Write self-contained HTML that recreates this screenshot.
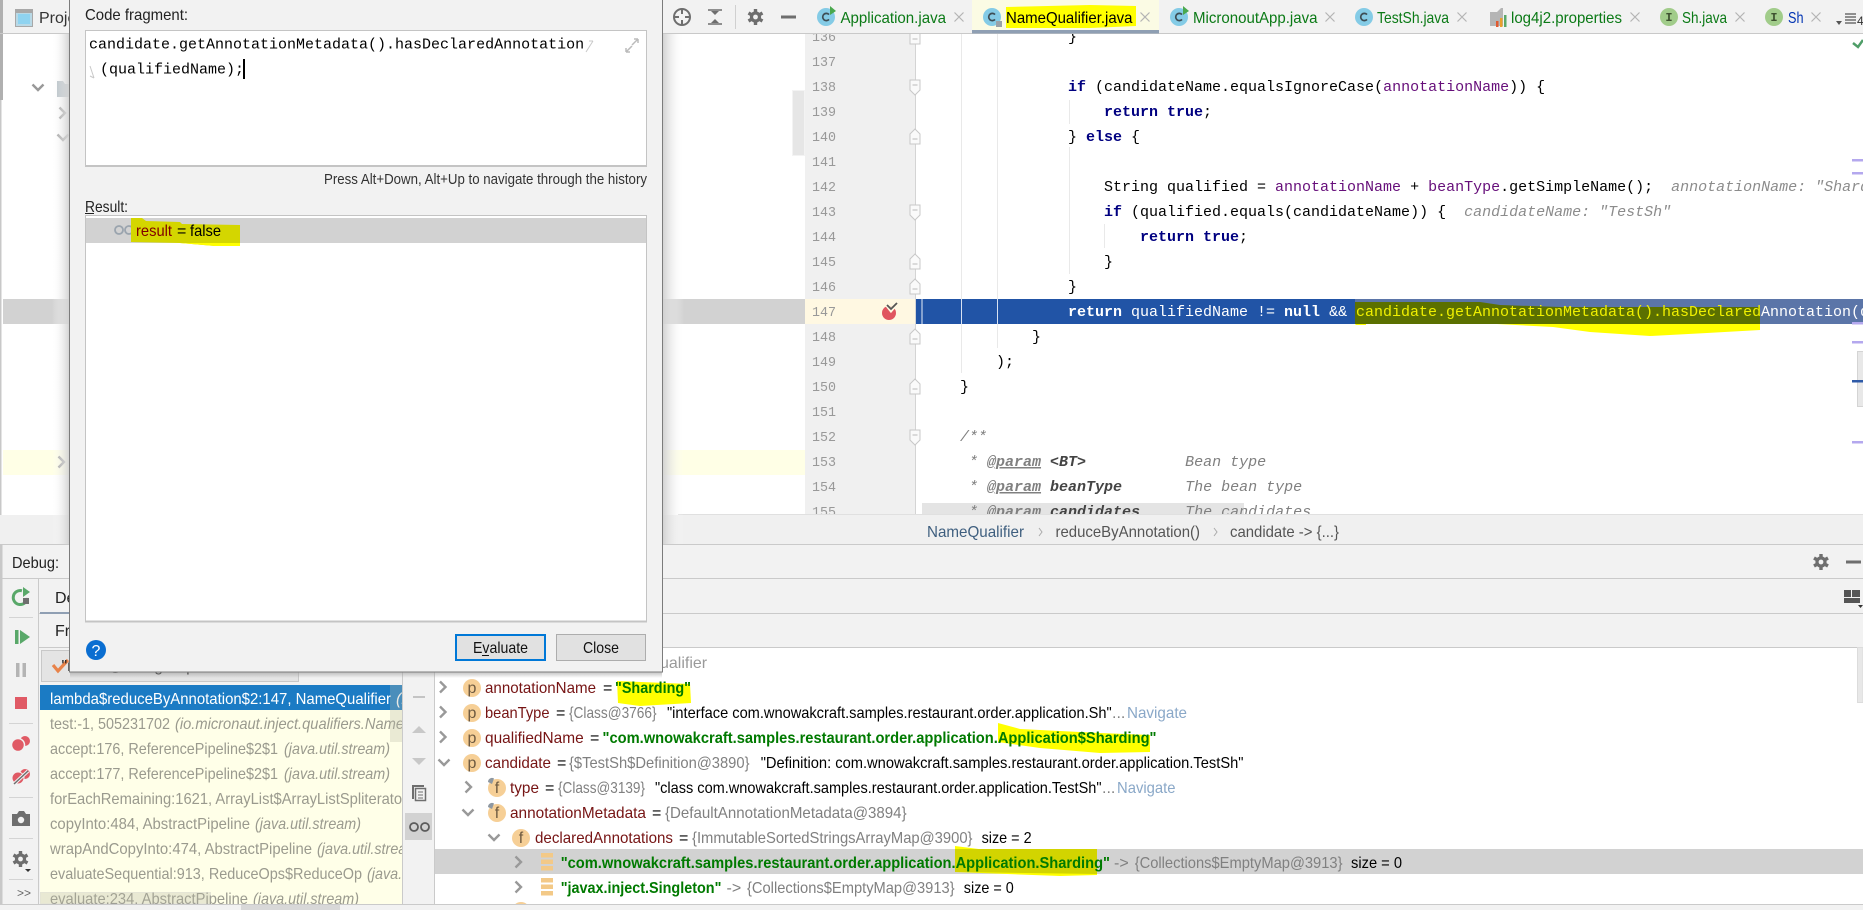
<!DOCTYPE html>
<html><head><meta charset="utf-8"><title>Debug</title>
<style>
html,body{margin:0;padding:0;background:#fff;overflow:hidden}
svg{display:block}
text{white-space:pre}
.s{font:16px "Liberation Sans",sans-serif}
.m{font:15px "Liberation Mono",monospace;fill:#000}
.k{font-weight:bold;fill:#000080}
.v{fill:#660e7a}
.c{font-style:italic;fill:#808080}
.h{font-style:italic;fill:#8c8c8c}
.ln{font:14px "Liberation Mono",monospace;fill:#999}
.tab{fill:#0b7a16}
.fr{fill:#9a9a8e}
.it{font-style:italic}
.n{fill:#761414}
.g{fill:#808080}
.b{font-weight:bold;fill:#007a00}
.nav{fill:#8aa8c8}
.ic{font:bold 12px "Liberation Mono",monospace;text-anchor:middle}
</style></head><body>
<svg width="1863" height="910" viewBox="0 0 1863 910" xmlns="http://www.w3.org/2000/svg">
<defs>
<linearGradient id="sr" x1="0" x2="1" y1="0" y2="0"><stop offset="0" stop-color="#cfcfcf"/><stop offset="1" stop-color="#fff" stop-opacity="0"/></linearGradient>
<linearGradient id="sl" x1="1" x2="0" y1="0" y2="0"><stop offset="0" stop-color="#cfcfcf"/><stop offset="1" stop-color="#fff" stop-opacity="0"/></linearGradient>
<linearGradient id="sb" x1="0" x2="0" y1="0" y2="1"><stop offset="0" stop-color="#999" stop-opacity=".6"/><stop offset="1" stop-color="#999" stop-opacity="0"/></linearGradient>
<g id="x"><path d="M-4.500-4.500 4.500 4.500M-4.500 4.500 4.500-4.500" stroke="#b4b4b4" stroke-width="1.200" fill="none"/></g>
<g id="cr"><path d="M-2.500-5.500 3 0-2.500 5.500" stroke="#999" stroke-width="2.400" fill="none"/></g>
<g id="cd"><path d="M-5.500-2.500 0 3 5.500-2.500" stroke="#999" stroke-width="2.400" fill="none"/></g>
<g id="gear"><path d="M0-8V8M-7-4 7 4M-7 4 7-4" stroke="#6e6e6e" stroke-width="3.400" fill="none"/><circle r="5.600" fill="#6e6e6e"/><circle r="2.400" fill="#f2f2f2"/></g>
<g id="cls"><circle r="9" fill="#84cbe6"/><path d="M3-2.400A3.600 3.600 0 1 0 3 2.400" stroke="#3d4d55" stroke-width="1.700" fill="none"/></g>
<path id="run" d="M0-5 6 0 0 4Z" fill="#4aa84e"/>
<g id="fd"><path d="M-5-7H5V3L0 8-5 3Z" fill="#fafafa" stroke="#c8c8c8"/><path d="M-2.500-2H2.500" stroke="#bbb"/></g>
<g id="fu"><path d="M-5 7H5V-3L0-8-5-3Z" fill="#fafafa" stroke="#c8c8c8"/><path d="M-2.500 2H2.500" stroke="#bbb"/></g>
<g id="p"><circle r="9" fill="#f6cf96"/></g>
<g id="f"><circle r="9" fill="#f6cf96"/><path d="M-9-6A4 4 0 0 1-3-9.500L-5-4Z" fill="#8e98a2"/></g>
<g id="mp"><rect x="-6" y="-9" width="12" height="4.500" fill="#f3c987"/><rect x="-6" y="-2.500" width="12" height="4.500" fill="#f3c987"/><rect x="-6" y="4" width="12" height="4.500" fill="#f3c987"/></g>
</defs>

<rect width="1863" height="910" fill="#fff"/>

<!-- project panel -->
<rect x="3" y="299" width="802" height="25" fill="#d2d2d2"/>
<rect x="3" y="450" width="802" height="25" fill="#ffffe6"/>
<use href="#cr" x="61" y="462"/>
<rect x="792.500" y="90.500" width="12" height="65" fill="#e6e6e6" stroke="#f3f3f3"/>
<rect x="0" y="0" width="3" height="100" fill="#b0b0b0"/>
<rect x="0" y="100" width="1.500" height="810" fill="#c8c8c8"/>
<use href="#cd" x="38" y="87"/>
<path d="M57 81H63L65 84H70V97H57Z" fill="#aeb9c0"/>
<use href="#cr" x="62" y="113"/>
<use href="#cd" x="63" y="137"/>

<!-- gutter -->
<rect x="805" y="33" width="111" height="482" fill="#f0f0f0"/>
<rect x="805" y="299" width="110.500" height="25" fill="#fff8e2"/>
<rect x="915" y="33" width="1" height="482" fill="#d4d4d4"/>
<g transform="translate(0,-1)">
<text class="ln" x="812" y="42" textLength="24" lengthAdjust="spacingAndGlyphs">136</text>
<text class="ln" x="812" y="67" textLength="24" lengthAdjust="spacingAndGlyphs">137</text>
<text class="ln" x="812" y="92" textLength="24" lengthAdjust="spacingAndGlyphs">138</text>
<text class="ln" x="812" y="117" textLength="24" lengthAdjust="spacingAndGlyphs">139</text>
<text class="ln" x="812" y="142" textLength="24" lengthAdjust="spacingAndGlyphs">140</text>
<text class="ln" x="812" y="167" textLength="24" lengthAdjust="spacingAndGlyphs">141</text>
<text class="ln" x="812" y="192" textLength="24" lengthAdjust="spacingAndGlyphs">142</text>
<text class="ln" x="812" y="217" textLength="24" lengthAdjust="spacingAndGlyphs">143</text>
<text class="ln" x="812" y="242" textLength="24" lengthAdjust="spacingAndGlyphs">144</text>
<text class="ln" x="812" y="267" textLength="24" lengthAdjust="spacingAndGlyphs">145</text>
<text class="ln" x="812" y="292" textLength="24" lengthAdjust="spacingAndGlyphs">146</text>
<text class="ln" x="812" y="317" textLength="24" lengthAdjust="spacingAndGlyphs">147</text>
<text class="ln" x="812" y="342" textLength="24" lengthAdjust="spacingAndGlyphs">148</text>
<text class="ln" x="812" y="367" textLength="24" lengthAdjust="spacingAndGlyphs">149</text>
<text class="ln" x="812" y="392" textLength="24" lengthAdjust="spacingAndGlyphs">150</text>
<text class="ln" x="812" y="417" textLength="24" lengthAdjust="spacingAndGlyphs">151</text>
<text class="ln" x="812" y="442" textLength="24" lengthAdjust="spacingAndGlyphs">152</text>
<text class="ln" x="812" y="467" textLength="24" lengthAdjust="spacingAndGlyphs">153</text>
<text class="ln" x="812" y="492" textLength="24" lengthAdjust="spacingAndGlyphs">154</text>
<text class="ln" x="812" y="517" textLength="24" lengthAdjust="spacingAndGlyphs">155</text>
</g>
<use href="#fu" x="915" y="37"/>
<use href="#fd" x="915" y="87"/>
<use href="#fu" x="915" y="137"/>
<use href="#fd" x="915" y="212"/>
<use href="#fu" x="915" y="262"/>
<use href="#fu" x="915" y="287"/>
<use href="#fu" x="915" y="337"/>
<use href="#fu" x="915" y="387"/>
<use href="#fd" x="915" y="437"/>

<!-- breakpoint -->
<circle cx="889" cy="313" r="7" fill="#e0555f"/>
<path d="M887 305 891 310 897 303" stroke="#fff8e2" stroke-width="4" fill="none"/>
<path d="M887 305 891 309 897 303" stroke="#555" stroke-width="1.800" fill="none"/>

<!-- indent guides -->
<g fill="#e9e9e9">
<rect x="961" y="33" width="1" height="340"/>
<rect x="997" y="33" width="1" height="315"/>
<rect x="1069" y="100" width="1" height="24"/>
<rect x="1069" y="147" width="1" height="127"/>
<rect x="1104" y="224" width="1" height="24"/>
</g>

<!-- line 147 -->
<rect x="916" y="299" width="947" height="25" fill="#2154a6"/>
<rect x="1355" y="299" width="508" height="25" fill="#5b75a8"/>
<rect x="921.500" y="299" width="1" height="25" fill="#e8eef8"/>
<rect x="961" y="299" width="1" height="25" fill="#d8e2f2"/>
<rect x="997" y="299" width="1" height="25" fill="#d8e2f2"/>
<path d="M1355 302H1480L1500 305 1560 307H1760V324H1355Z" fill="#5b7000"/>
<path d="M1355 324H1366V325L1356 325ZM1497 324H1760V330L1707 333 1650 336 1590 332 1553 327Z" fill="#ffff00"/>

<rect x="922" y="503" width="322" height="14" fill="#e4e4e4"/>

<!-- code -->
<g transform="translate(0,-1)">
<text class="m" x="1068" y="42">}</text>
<text class="m" x="1068" y="92"><tspan class="k">if</tspan> (candidateName.equalsIgnoreCase(<tspan class="v">annotationName</tspan>)) {</text>
<text class="m" x="1104" y="117"><tspan class="k">return true</tspan>;</text>
<text class="m" x="1068" y="142">} <tspan class="k">else</tspan> {</text>
<text class="m" x="1104" y="192">String qualified = <tspan class="v">annotationName</tspan> + <tspan class="v">beanType</tspan>.getSimpleName();  <tspan class="h">annotationName: "Sharding"</tspan></text>
<text class="m" x="1104" y="217"><tspan class="k">if</tspan> (qualified.equals(candidateName)) {  <tspan class="h">candidateName: "TestSh"</tspan></text>
<text class="m" x="1140" y="242"><tspan class="k">return true</tspan>;</text>
<text class="m" x="1104" y="267">}</text>
<text class="m" x="1068" y="292">}</text>
<text class="m" x="1068" y="317" style="fill:#fff"><tspan font-weight="bold">return</tspan> qualifiedName != <tspan font-weight="bold">null</tspan> &amp;&amp; </text>
<text class="m" x="1356" y="317" style="fill:#f0f000">candidate.getAnnotationMetadata().hasDeclared</text>
<text class="m" x="1761" y="317" style="fill:#fff">Annotation(qualifiedName);</text>
<text class="m" x="1032" y="342">}</text>
<text class="m" x="996" y="367">);</text>
<text class="m" x="960" y="392">}</text>
<text class="m c" x="960" y="442" style="fill:#808080">/**</text>
<text class="m c" x="969" y="467" style="fill:#808080">* <tspan text-decoration="underline" font-weight="bold">@param</tspan> <tspan font-weight="bold" fill="#444">&lt;BT&gt;</tspan>           Bean type</text>
<text class="m c" x="969" y="492" style="fill:#808080">* <tspan text-decoration="underline" font-weight="bold">@param</tspan> <tspan font-weight="bold" fill="#444">beanType</tspan>       The bean type</text>
<text class="m c" x="969" y="517" style="fill:#808080">* <tspan text-decoration="underline" font-weight="bold">@param</tspan> <tspan font-weight="bold" fill="#444">candidates</tspan>     The candidates</text>
</g>

<!-- stripe marks -->
<path d="M1853 43 1858 47 1863 40" stroke="#4f9e68" stroke-width="2.500" fill="none"/>
<rect x="1852" y="159" width="11" height="2.500" fill="#b4a8ee"/>
<rect x="1852" y="172" width="11" height="2.500" fill="#b4a8ee"/>
<rect x="1852" y="322" width="11" height="2.500" fill="#b4a8ee"/>
<rect x="1852" y="341" width="11" height="2.500" fill="#b4a8ee"/>
<rect x="1857.500" y="351.500" width="6" height="55" fill="#e8e8e8" stroke="#d4d4d4"/>
<rect x="1852" y="380" width="11" height="2.500" fill="#2e5aa7"/>
<rect x="1852" y="441" width="11" height="2.500" fill="#b4a8ee"/>

<!-- breadcrumb -->
<rect x="0" y="515" width="1863" height="30" fill="#f0f0f0"/>
<rect x="678" y="514" width="1185" height="1" fill="#e0e0e0"/>
<text class="s" x="927" y="537" fill="#3f5f7f" textLength="97" lengthAdjust="spacingAndGlyphs">NameQualifier</text>
<path d="M1039 528 1042 532 1039 536" stroke="#aaa" fill="none"/>
<text class="s" x="1055.500" y="537" fill="#555" textLength="144.500" lengthAdjust="spacingAndGlyphs">reduceByAnnotation()</text>
<path d="M1214 528 1217 532 1214 536" stroke="#aaa" fill="none"/>
<text class="s" x="1230" y="537" fill="#555" textLength="109" lengthAdjust="spacingAndGlyphs">candidate -&gt; {...}</text>

<!-- tab bar -->
<rect x="0" y="0" width="1863" height="33" fill="#f2f2f2"/>
<rect x="0" y="33" width="1863" height="1" fill="#c9c9c9"/>
<rect x="0" y="0" width="3" height="33" fill="#b0b0b0"/>
<rect x="15.500" y="9.500" width="17" height="17" fill="#b9d9e6" stroke="#a8a8a8"/>
<rect x="16" y="10" width="16" height="3" fill="#a8a8a8"/>
<rect x="18" y="14" width="12" height="10" fill="#8fd3f0"/>
<text class="s" x="39" y="23" fill="#333">Project</text>

<circle cx="682" cy="17" r="8" fill="none" stroke="#6e6e6e" stroke-width="2"/>
<path d="M682 9V14M682 20V25M674 17H679M685 17H690" stroke="#6e6e6e" stroke-width="2"/>
<path d="M708 10H722M708 24H722" stroke="#6e6e6e" stroke-width="1.500" fill="none"/>
<path d="M711 11H719L715 15ZM711 23H719L715 19Z" fill="#6e6e6e"/>
<rect x="735" y="5" width="1" height="24" fill="#d0d0d0"/>
<use href="#gear" x="755.500" y="17"/>
<rect x="781" y="15.500" width="15" height="3" fill="#6e6e6e"/>

<use href="#cls" x="826" y="17"/>
<use href="#run" x="830" y="11"/>
<text class="s tab" x="840.500" y="23" textLength="105.500" lengthAdjust="spacingAndGlyphs">Application.java</text>
<use href="#x" x="959" y="17"/>

<rect x="972" y="0" width="187" height="30" fill="#fbfbe4"/>
<rect x="972" y="30" width="187" height="3.500" fill="#8f9fb3"/>
<use href="#cls" x="992" y="17"/>
<rect x="996" y="21" width="6" height="6" fill="#9aa2a8"/>
<path d="M1006 7 1090 5 1136 6V26L1090 28 1006 28Z" fill="#ffff00"/>
<text class="s" x="1006" y="23" fill="#000" textLength="126.500" lengthAdjust="spacingAndGlyphs">NameQualifier.java</text>
<use href="#x" x="1145" y="17"/>

<use href="#cls" x="1179" y="17"/>
<use href="#run" x="1183" y="11"/>
<text class="s tab" x="1193" y="23" textLength="124.500" lengthAdjust="spacingAndGlyphs">MicronoutApp.java</text>
<use href="#x" x="1330" y="17"/>

<use href="#cls" x="1364" y="17"/>
<text class="s tab" x="1377" y="23" textLength="72" lengthAdjust="spacingAndGlyphs">TestSh.java</text>
<use href="#x" x="1462" y="17"/>

<path d="M1490 12H1497L1501 8H1503V26H1490Z" fill="#b5b5b5"/>
<rect x="1496" y="21" width="2.500" height="6" fill="#e05a30"/>
<rect x="1500" y="18" width="2.500" height="9" fill="#e8a02c"/>
<rect x="1504" y="15" width="2.500" height="12" fill="#59a869"/>
<text class="s tab" x="1511" y="23" textLength="111" lengthAdjust="spacingAndGlyphs">log4j2.properties</text>
<use href="#x" x="1635" y="17"/>

<circle cx="1669" cy="17" r="9" fill="#a1cc8a"/>
<text class="ic" x="1669" y="21" fill="#3e5230">I</text>
<text class="s tab" x="1682" y="23" textLength="45" lengthAdjust="spacingAndGlyphs">Sh.java</text>
<use href="#x" x="1740" y="17"/>

<circle cx="1774" cy="17" r="9" fill="#a1cc8a"/>
<text class="ic" x="1774" y="21" fill="#3e5230">I</text>
<text class="s" x="1788" y="23" fill="#0033b3" textLength="15.500" lengthAdjust="spacingAndGlyphs">Sh</text>
<use href="#x" x="1816" y="17"/>

<path d="M1836 21H1842L1839 25Z" fill="#555"/>
<path d="M1845 14H1856M1845 17H1856M1845 20H1856M1845 23H1856" stroke="#6e6e6e" stroke-width="1.500"/>
<text class="s" x="1857" y="25" fill="#333" style="font-size:12px">4</text>

<!-- debug panel -->
<rect x="0" y="544" width="1863" height="366" fill="#f2f2f2"/>
<rect x="0" y="544" width="1863" height="1" fill="#cacaca"/>
<rect x="0" y="578" width="1863" height="1" fill="#cacaca"/>
<rect x="38" y="613" width="1825" height="1" fill="#cacaca"/>
<rect x="38" y="647" width="1825" height="1" fill="#cacaca"/>
<rect x="38" y="578" width="1" height="326" fill="#cacaca"/>
<rect x="0" y="544" width="2.500" height="366" fill="#c8c8c8"/>
<text class="s" x="12" y="568" fill="#222" textLength="47" lengthAdjust="spacingAndGlyphs">Debug:</text>
<use href="#gear" x="1821" y="562"/>
<rect x="1846" y="560.500" width="15" height="3" fill="#6e6e6e"/>
<path d="M1844 590H1851V597H1844ZM1852 590H1860V597H1852ZM1844 598H1860V603H1844Z" fill="#555"/>
<path d="M1858 605H1863L1860.500 608Z" fill="#333"/>

<text class="s" x="55" y="603" fill="#222">Debugger</text>
<rect x="40" y="612" width="60" height="2" fill="#8f9fb3"/>
<text class="s" x="55" y="636" fill="#222">Frames</text>

<rect x="41.500" y="650.500" width="257" height="31" fill="#e4e4e4" stroke="#c8c8c8"/>
<path d="M53 665 58 671 68 660" stroke="#e8834a" stroke-width="3.200" fill="none"/>
<text class="s" x="195" y="671" fill="#222" text-anchor="end">"main"@1 in group</text>

<!-- frames -->
<rect x="40" y="685" width="362" height="219" fill="#ffffe8"/>
<rect x="40" y="685" width="362" height="25" fill="#1b7bc4"/>
<text class="s" x="50" y="704" fill="#fff" textLength="341" lengthAdjust="spacingAndGlyphs">lambda$reduceByAnnotation$2:147, NameQualifier</text>
<text class="s it" x="396" y="704" fill="#fff">(io.micronaut</text>
<text class="s fr" x="50" y="729" textLength="120" lengthAdjust="spacingAndGlyphs">test:-1, 505231702</text>
<text class="s fr it" x="175" y="729" textLength="229" lengthAdjust="spacingAndGlyphs">(io.micronaut.inject.qualifiers.Name</text>
<text class="s fr" x="50" y="754" textLength="228" lengthAdjust="spacingAndGlyphs">accept:176, ReferencePipeline$2$1</text>
<text class="s fr it" x="284" y="754" textLength="106" lengthAdjust="spacingAndGlyphs">(java.util.stream)</text>
<text class="s fr" x="50" y="779" textLength="228" lengthAdjust="spacingAndGlyphs">accept:177, ReferencePipeline$2$1</text>
<text class="s fr it" x="284" y="779" textLength="106" lengthAdjust="spacingAndGlyphs">(java.util.stream)</text>
<text class="s fr" x="50" y="804" textLength="357" lengthAdjust="spacingAndGlyphs">forEachRemaining:1621, ArrayList$ArrayListSpliterator</text>
<text class="s fr" x="50" y="829" textLength="200" lengthAdjust="spacingAndGlyphs">copyInto:484, AbstractPipeline</text>
<text class="s fr it" x="255" y="829" textLength="106" lengthAdjust="spacingAndGlyphs">(java.util.stream)</text>
<text class="s fr" x="50" y="854" textLength="262" lengthAdjust="spacingAndGlyphs">wrapAndCopyInto:474, AbstractPipeline</text>
<text class="s fr it" x="317" y="854" textLength="106" lengthAdjust="spacingAndGlyphs">(java.util.stream)</text>
<text class="s fr" x="50" y="879" textLength="312" lengthAdjust="spacingAndGlyphs">evaluateSequential:913, ReduceOps$ReduceOp</text>
<text class="s fr it" x="367" y="879" textLength="106" lengthAdjust="spacingAndGlyphs">(java.util.stream)</text>
<text class="s fr" x="50" y="904" textLength="198" lengthAdjust="spacingAndGlyphs">evaluate:234, AbstractPipeline</text>
<text class="s fr it" x="253" y="904" textLength="106" lengthAdjust="spacingAndGlyphs">(java.util.stream)</text>
<rect x="390" y="685" width="12" height="57" fill="#b8b8a4" opacity=".3"/>
<rect x="40.500" y="892.500" width="170" height="11" fill="#b8b8a4" opacity=".3" stroke="#aaa"/>

<!-- mid toolbar -->
<rect x="402" y="647" width="32" height="257" fill="#f2f2f2"/>
<rect x="402" y="647" width="1" height="257" fill="#cacaca"/>
<rect x="434" y="647" width="1" height="257" fill="#cacaca"/>
<rect x="413" y="696" width="12" height="2" fill="#c4c4c4"/>
<path d="M412 733H426L419 726Z" fill="#c8c8c8"/>
<path d="M412 758H426L419 765Z" fill="#c8c8c8"/>
<path d="M412 785V799H414V787H424V785Z" fill="#6e6e6e"/>
<rect x="415.500" y="788.500" width="10" height="12" fill="#f2f2f2" stroke="#6e6e6e" stroke-width="1.500"/>
<path d="M418 792H423M418 795H423M418 798H423" stroke="#6e6e6e"/>
<rect x="405" y="813" width="27" height="27" fill="#d2d2d2"/>
<circle cx="414" cy="827" r="4" fill="none" stroke="#5c5c5c" stroke-width="1.800"/>
<circle cx="425" cy="827" r="4" fill="none" stroke="#5c5c5c" stroke-width="1.800"/>

<!-- left toolbar -->
<path d="M27 599A7 7 0 1 1 23 591" stroke="#59a869" stroke-width="3" fill="none" transform="rotate(-10 21 597)"/>
<path d="M23 587 30 592 23 597Z" fill="#59a869"/>
<rect x="23" y="598" width="6" height="6" fill="#6e6e6e"/>
<path d="M9 617.500H33M9 723.500H33M9 797.500H33M9 838.500H33M9 879.500H33" stroke="#d4d4d4"/>
<rect x="15" y="630" width="3.500" height="14" fill="#59a869"/>
<path d="M20 630 30 637 20 644Z" fill="#59a869"/>
<rect x="16" y="663" width="3.500" height="14" fill="#b4b4b4"/>
<rect x="22.500" y="663" width="3.500" height="14" fill="#b4b4b4"/>
<rect x="15" y="697" width="12" height="12" fill="#e05a65"/>
<circle cx="25" cy="741" r="5" fill="#e05a65"/>
<circle cx="18" cy="745" r="6.500" fill="#e05a65" stroke="#f2f2f2" stroke-width="1.500"/>
<circle cx="25" cy="774" r="5" fill="#e05a65"/>
<circle cx="18" cy="778" r="6" fill="#e05a65" stroke="#f2f2f2"/>
<path d="M14 784 28 771" stroke="#f2f2f2" stroke-width="3.500"/>
<path d="M14 784 28 771" stroke="#6e6e6e" stroke-width="1.500"/>
<path d="M12 814H17L19 811H24L26 814H30V826H12Z" fill="#6e6e6e"/>
<circle cx="21" cy="820" r="3.200" fill="#f2f2f2"/>
<use href="#gear" x="20.500" y="859"/>
<path d="M25 869H31L28 872Z" fill="#333"/>
<text class="s" x="17" y="897" fill="#666" style="font-size:12px">&gt;&gt;</text>

<!-- variables -->
<rect x="435" y="648" width="1428" height="256" fill="#fff"/>
<rect x="435" y="849" width="1428" height="25" fill="#d2d2d2"/>
<rect x="1857.500" y="647.500" width="5.500" height="55" fill="#e8e8e8" stroke="#dcdcdc"/>
<text class="s" x="660" y="668" fill="#9a9a9a">ualifier</text>

<path d="M617 681 690 684 691 703 640 706 618 703Z" fill="#ffff00"/>
<path d="M998 723 1020 729 1100 733 1150 735 1150 752 1100 753 1040 748 998 742Z" fill="#ffff00"/>
<path d="M955 846 1010 853 1097 857 1097 875 1060 876 955 872Z" fill="#ffff00"/>
<path d="M955 849H1097V874L955 872Z" fill="#d2d400"/>

<use href="#cr" x="442.500" y="687"/>
<use href="#p" x="472" y="688"/>
<text class="s" x="472" y="693" text-anchor="middle" fill="#6e5a40">p</text>
<text class="s n" x="485" y="693" textLength="111" lengthAdjust="spacingAndGlyphs">annotationName</text>
<text class="s" x="603" y="693">=</text>
<text class="s b" x="615" y="693" textLength="76" lengthAdjust="spacingAndGlyphs">"Sharding"</text>

<use href="#cr" x="442.500" y="712"/>
<use href="#p" x="472" y="713"/>
<text class="s" x="472" y="718" text-anchor="middle" fill="#6e5a40">p</text>
<text class="s n" x="485" y="718" textLength="64.500" lengthAdjust="spacingAndGlyphs">beanType</text>
<text class="s" x="556" y="718">=</text>
<text class="s g" x="569" y="718" textLength="87.500" lengthAdjust="spacingAndGlyphs">{Class@3766}</text>
<text class="s" x="667" y="718" textLength="444.700" lengthAdjust="spacingAndGlyphs">"interface com.wnowakcraft.samples.restaurant.order.application.Sh"</text>
<text class="s g" x="1112" y="718">...</text>
<text class="s nav" x="1127" y="718" textLength="60" lengthAdjust="spacingAndGlyphs">Navigate</text>

<use href="#cr" x="442.500" y="737"/>
<use href="#p" x="472" y="738"/>
<text class="s" x="472" y="743" text-anchor="middle" fill="#6e5a40">p</text>
<text class="s n" x="485" y="743" textLength="98.700" lengthAdjust="spacingAndGlyphs">qualifiedName</text>
<text class="s" x="590" y="743">=</text>
<text class="s b" x="602.500" y="743" textLength="554" lengthAdjust="spacingAndGlyphs">"com.wnowakcraft.samples.restaurant.order.application.Application$Sharding"</text>

<use href="#cd" x="444" y="762"/>
<use href="#p" x="472" y="763"/>
<text class="s" x="472" y="768" text-anchor="middle" fill="#6e5a40">p</text>
<text class="s n" x="485" y="768" textLength="66" lengthAdjust="spacingAndGlyphs">candidate</text>
<text class="s" x="557" y="768">=</text>
<text class="s g" x="569" y="768" textLength="180.500" lengthAdjust="spacingAndGlyphs">{$TestSh$Definition@3890}</text>
<text class="s" x="760.700" y="768" textLength="482.800" lengthAdjust="spacingAndGlyphs">"Definition: com.wnowakcraft.samples.restaurant.order.application.TestSh"</text>

<use href="#cr" x="468" y="787"/>
<use href="#f" x="497" y="788"/>
<text class="s" x="497" y="793" text-anchor="middle" fill="#6e5a40">f</text>
<text class="s n" x="510" y="793" textLength="29" lengthAdjust="spacingAndGlyphs">type</text>
<text class="s" x="545" y="793">=</text>
<text class="s g" x="558" y="793" textLength="87" lengthAdjust="spacingAndGlyphs">{Class@3139}</text>
<text class="s" x="655" y="793" textLength="446.500" lengthAdjust="spacingAndGlyphs">"class com.wnowakcraft.samples.restaurant.order.application.TestSh"</text>
<text class="s g" x="1102" y="793">...</text>
<text class="s nav" x="1117" y="793" textLength="58.500" lengthAdjust="spacingAndGlyphs">Navigate</text>

<use href="#cd" x="468" y="812"/>
<use href="#f" x="497" y="813"/>
<text class="s" x="497" y="818" text-anchor="middle" fill="#6e5a40">f</text>
<text class="s n" x="510" y="818" textLength="136" lengthAdjust="spacingAndGlyphs">annotationMetadata</text>
<text class="s" x="652" y="818">=</text>
<text class="s g" x="665" y="818" textLength="241.600" lengthAdjust="spacingAndGlyphs">{DefaultAnnotationMetadata@3894}</text>

<use href="#cd" x="494" y="837"/>
<use href="#p" x="521" y="838"/>
<text class="s" x="521" y="843" text-anchor="middle" fill="#6e5a40">f</text>
<text class="s n" x="535" y="843" textLength="138" lengthAdjust="spacingAndGlyphs">declaredAnnotations</text>
<text class="s" x="679" y="843">=</text>
<text class="s g" x="692" y="843" textLength="280.500" lengthAdjust="spacingAndGlyphs">{ImmutableSortedStringsArrayMap@3900}</text>
<text class="s" x="981.600" y="843" textLength="50" lengthAdjust="spacingAndGlyphs">size = 2</text>

<use href="#cr" x="518" y="862"/>
<use href="#mp" x="547" y="862"/>
<text class="s b" x="560.700" y="868" textLength="549.300" lengthAdjust="spacingAndGlyphs">"com.wnowakcraft.samples.restaurant.order.application.Application.Sharding"</text>
<text class="s g" x="1114" y="868">-&gt;</text>
<text class="s g" x="1134.700" y="868" textLength="207.800" lengthAdjust="spacingAndGlyphs">{Collections$EmptyMap@3913}</text>
<text class="s" x="1351" y="868" textLength="51" lengthAdjust="spacingAndGlyphs">size = 0</text>

<use href="#cr" x="518" y="887"/>
<use href="#mp" x="547" y="887"/>
<text class="s b" x="560.700" y="893" textLength="160.700" lengthAdjust="spacingAndGlyphs">"javax.inject.Singleton"</text>
<text class="s g" x="726.500" y="893">-&gt;</text>
<text class="s g" x="747" y="893" textLength="207.600" lengthAdjust="spacingAndGlyphs">{Collections$EmptyMap@3913}</text>
<text class="s" x="963.800" y="893" textLength="50" lengthAdjust="spacingAndGlyphs">size = 0</text>
<circle cx="521" cy="911" r="9" fill="#f6cf96"/>

<!-- bottom strip -->
<rect x="0" y="904" width="1863" height="6" fill="#f2f2f2"/>
<rect x="0" y="904" width="1863" height="1" fill="#cacaca"/>
<rect x="241" y="905" width="99" height="5" fill="#d8d8d8"/>

<!-- dialog shadow -->
<rect x="662" y="34" width="22" height="510" fill="url(#sr)"/>
<rect x="52" y="34" width="18" height="510" fill="url(#sl)"/>
<rect x="70" y="672" width="592" height="6" fill="url(#sb)"/>

<!-- dialog -->
<rect x="69.500" y="-2" width="593" height="674" fill="#f2f2f2" stroke="#7c7c7c"/>
<text class="s" x="85" y="20" fill="#222" textLength="103" lengthAdjust="spacingAndGlyphs">Code fragment:</text>
<rect x="85.500" y="30.500" width="561" height="136" fill="#fff" stroke="#c4c4c4"/>
<rect x="85" y="165" width="562" height="2" fill="#c4c4c4"/>
<text class="m" x="89" y="48.500">candidate.getAnnotationMetadata().hasDeclaredAnnotation</text>
<text class="m" x="100" y="73.500">(qualifiedName);</text>
<rect x="243" y="59" width="2" height="20" fill="#000"/>
<path d="M593 41 586 52M593 41H589M90 66 94 78M94 78 90 76" stroke="#c8c8c8" fill="none"/>
<path d="M638 39 632 45M638 39V43M638 39H634M626 52 632 46M626 52V48M626 52H630" stroke="#bbb" stroke-width="1.500" fill="none"/>

<text class="s" x="324" y="184" fill="#333" textLength="323" lengthAdjust="spacingAndGlyphs" style="font-size:14.500px">Press Alt+Down, Alt+Up to navigate through the history</text>
<text class="s" x="85" y="212" fill="#222" textLength="43" lengthAdjust="spacingAndGlyphs">Result:</text>
<rect x="85" y="213" width="9" height="1" fill="#222"/>
<rect x="85.500" y="215.500" width="561" height="406" fill="#fff" stroke="#c4c4c4"/>
<rect x="85" y="620.500" width="562" height="2" fill="#c4c4c4"/>
<rect x="86" y="218" width="560" height="25" fill="#d2d2d2"/>
<circle cx="119" cy="230" r="4" fill="none" stroke="#9aa4ae" stroke-width="1.800"/>
<circle cx="129" cy="230" r="4" fill="none" stroke="#9aa4ae" stroke-width="1.800"/>
<path d="M131 218 142 218 146 221 180 222 182 224 240 225V243L240 246 215 246 180 243 131 242Z" fill="#d4d600"/>
<path d="M180 243 215 246 240 246V243Z" fill="#ffff00"/>
<text class="s" x="136" y="236" fill="#800000" textLength="36" lengthAdjust="spacingAndGlyphs">result</text>
<text class="s" x="177" y="236" fill="#000">=</text>
<text class="s" x="190" y="236" fill="#000" textLength="31" lengthAdjust="spacingAndGlyphs">false</text>

<circle cx="96" cy="650" r="10" fill="#0a6ed1"/>
<text class="s" x="96" y="656" fill="#fff" text-anchor="middle">?</text>
<rect x="456" y="635" width="89" height="25" fill="#e1e1e1" stroke="#0078d7" stroke-width="2"/>
<text class="s" x="473" y="653" fill="#111" textLength="55" lengthAdjust="spacingAndGlyphs">Evaluate</text>
<rect x="482" y="655" width="7" height="1" fill="#111"/>
<rect x="556.500" y="634.500" width="89" height="26" fill="#e1e1e1" stroke="#adadad"/>
<text class="s" x="583" y="653" fill="#111" textLength="36" lengthAdjust="spacingAndGlyphs">Close</text>
</svg>
</body></html>
